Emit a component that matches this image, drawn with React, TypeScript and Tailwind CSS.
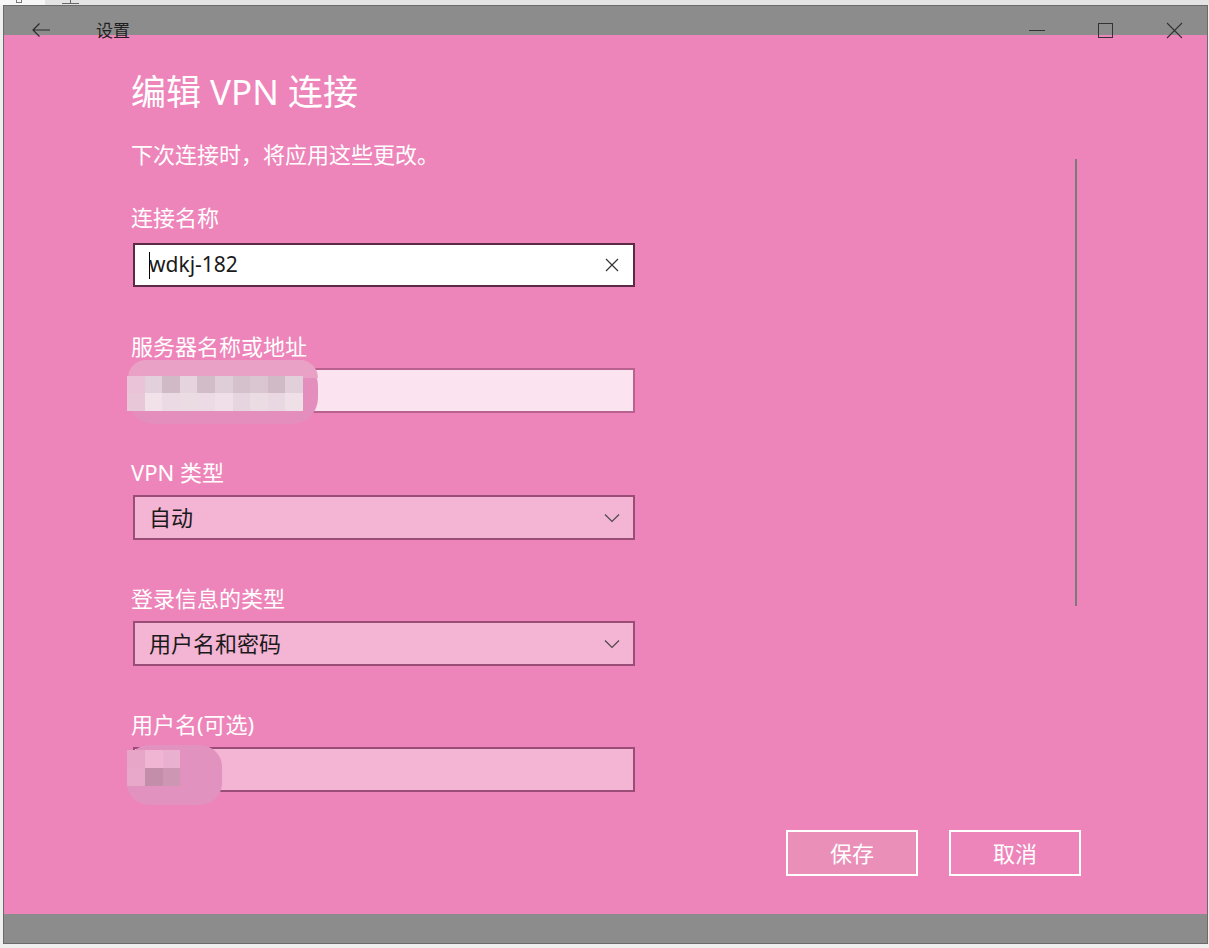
import React from "react";

const font = "font-['Noto_Sans','Noto_Sans_CJK_SC',sans-serif]";

function Label({ children }: { children: React.ReactNode }) {
  return <div className="h-[28px] leading-[28px] text-[22px] text-white">{children}</div>;
}

function Chevron() {
  return (
    <svg width="16" height="10" viewBox="0 0 16 10" className="mr-[13px]">
      <path d="M1 1.5 L8 8.5 L15 1.5" fill="none" stroke="#4a4a4a" strokeWidth="1.2" />
    </svg>
  );
}

function Select({ value }: { value: string }) {
  return (
    <div className="ml-[2px] w-[502px] h-[45px] border-2 border-[#9a4d76] bg-[#f4b4d4] flex items-center justify-between">
      <span className="pl-[14px] text-[22px] text-[#1a1a1a]">{value}</span>
      <Chevron />
    </div>
  );
}

const serverTop = ["#ebc3d8", "#e2d1dc", "#d0bac6", "#e5d4de", "#d1bcc8", "#dfcdd7", "#d4c1cb", "#d9c6d0", "#d0bac6", "#e1d0da"];
const serverBot = ["#e8c7d9", "#f3e1ea", "#ebd9e3", "#ebdbe3", "#ecdae4", "#f0dfe8", "#e6d4de", "#ebdbe3", "#e9d7e1", "#efdfe7"];
const userTop = ["#e7a6c8", "#f0b5d3", "#eab0cf"];
const userBot = ["#e8a8ca", "#c28ea9", "#cd97b3"];

export default function App() {
  return (
    <div className={`w-[1209px] h-[948px] bg-[#efefef] overflow-hidden ${font}`}>
      <div className="h-[5px] flex">
        <div className="w-[45px] bg-[#f7f7f7] relative">
          <div className="absolute left-[16px] top-0 w-[6px] h-[3px] border-b border-l border-r border-[#777]" />
        </div>
        <div className="flex-1 bg-[#e4e4e4] relative">
          <div className="absolute left-[17px] top-[3px] w-[17px] h-[1px] bg-[#666]" />
          <div className="absolute left-[25px] top-0 w-[1px] h-[3px] bg-[#666]" />
        </div>
      </div>
      <div className="ml-[3px] w-[1205px] h-[939px] border border-[#6a6a6a] flex flex-col relative">
        <div className="h-[29px] bg-[#8c8c8c]" />
        <div className="flex-1 bg-[#ee85ba] relative">
          <div className="ml-[127px] w-[950px] pt-[35px] flex flex-col">
            <h1 className="h-[44px] leading-[44px] text-[35px] text-white">编辑 VPN 连接</h1>
            <div className="mt-[26px] h-[28px] leading-[28px] text-[22px] text-white">下次连接时，将应用这些更改。</div>

            <div className="mt-[35px]">
              <Label>连接名称</Label>
            </div>
            <div className="mt-[12px] ml-[2px] w-[502px] h-[44px] border-2 border-[#5a2a46] bg-white flex items-center justify-between">
              <div className="flex items-center pl-[14px]">
                <span className="w-[1px] h-[27px] bg-black mr-[-1px]" />
                <span className="text-[21px] text-[#1a1a1a]">wdkj-182</span>
              </div>
              <svg width="14" height="14" viewBox="0 0 14 14" className="mr-[14px]">
                <path d="M1 1 L13 13 M13 1 L1 13" stroke="#333" strokeWidth="1.2" />
              </svg>
            </div>

            <div className="mt-[45px]">
              <Label>服务器名称或地址</Label>
            </div>
            <div className="mt-[8px] ml-[2px] w-[502px] h-[45px] border-2 border-[#b9628f] bg-[#fbe4ef] relative">
              <div className="absolute left-[-7px] top-[-10px] w-[190px] h-[64px] rounded-[26px] bg-[#e48ebd]" />
              <div className="absolute left-[-7px] top-[-10px] w-[190px] h-[18px] rounded-t-[26px] bg-[#e9a2c6]" />
              <div className="absolute left-[-8px] top-[6px] grid grid-cols-[repeat(10,17.6px)] grid-rows-[17px_18px]">
                {serverTop.map((c, i) => (
                  <div key={"t" + i} style={{ background: c }} />
                ))}
                {serverBot.map((c, i) => (
                  <div key={"b" + i} style={{ background: c }} />
                ))}
              </div>
            </div>

            <div className="mt-[45px]">
              <Label>VPN 类型</Label>
            </div>
            <div className="mt-[9px]">
              <Select value="自动" />
            </div>

            <div className="mt-[44px]">
              <Label>登录信息的类型</Label>
            </div>
            <div className="mt-[9px]">
              <Select value="用户名和密码" />
            </div>

            <div className="mt-[44px]">
              <Label>用户名(可选)</Label>
            </div>
            <div className="mt-[9px] ml-[2px] w-[502px] h-[45px] border-2 border-[#9a4d76] bg-[#f4b4d4] relative">
              <div className="absolute left-[-8px] top-[-4px] w-[95px] h-[60px] rounded-[22px] bg-[#e192bf]" />
              <div className="absolute left-[-8px] top-[1px] grid grid-cols-[18px_18px_17px] grid-rows-[18px_18px]">
                {userTop.map((c, i) => (
                  <div key={"t" + i} style={{ background: c }} />
                ))}
                {userBot.map((c, i) => (
                  <div key={"b" + i} style={{ background: c }} />
                ))}
              </div>
            </div>

            <div className="mt-[38px] flex justify-end gap-[31px]">
              <button className="w-[132px] h-[46px] border-2 border-white bg-[#e98fb8] text-white text-[22px]">保存</button>
              <button className="w-[132px] h-[46px] border-2 border-white bg-[#ee85ba] text-white text-[22px]">取消</button>
            </div>
          </div>
          <div className="absolute left-[1071px] top-[124px] w-[2px] h-[447px] bg-[#7a7a7a]" />
        </div>
        <div className="h-[29px] bg-[#8c8c8c]" />

        <div className="absolute left-[27px] top-[16px]">
          <svg width="20" height="16" viewBox="0 0 20 16">
            <path d="M19 8 H2 M8.5 1.5 L2 8 L8.5 14.5" fill="none" stroke="#2b2b2b" strokeWidth="1.2" />
          </svg>
        </div>
        <div className="absolute left-[92px] top-[15px] text-[17px] leading-[20px] text-[#1f1f1f]">设置</div>
        <div className="absolute left-[1025px] top-[24px] w-[16px] h-[1px] bg-[#333]" />
        <div className="absolute left-[1094px] top-[17px] w-[15px] h-[15px] border border-[#333]" />
        <div className="absolute left-[1162px] top-[16px]">
          <svg width="17" height="17" viewBox="0 0 17 17">
            <path d="M1 1 L16 16 M16 1 L1 16" stroke="#333" strokeWidth="1.1" />
          </svg>
        </div>
      </div>
    </div>
  );
}
